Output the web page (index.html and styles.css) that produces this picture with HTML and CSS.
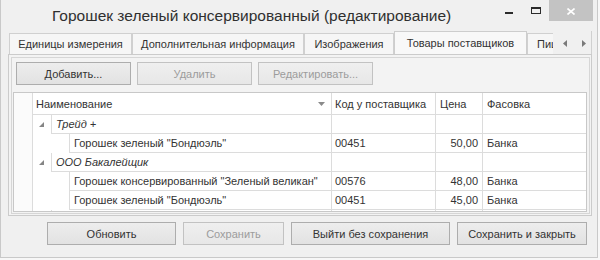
FILE: index.html
```html
<!DOCTYPE html>
<html lang="ru">
<head>
<meta charset="utf-8">
<title>Горошек зеленый консервированный (редактирование)</title>
<link rel="stylesheet" href="styles.css">
</head>
<body>
<div class="window">
  <div class="titlebar">
    <div class="title">Горошек зеленый консервированный (редактирование)</div>
    <div class="controls">
      <span class="ctl ctl-min"><svg width="8" height="2" viewBox="0 0 8 2"><rect width="8" height="2" fill="#2b2b2b"/></svg></span>
      <span class="ctl ctl-max"><svg width="10" height="7" viewBox="0 0 10 7"><rect x="0.5" y="1" width="9" height="5.5" fill="none" stroke="#2b2b2b" stroke-width="1"/><rect x="0" y="0" width="10" height="2" fill="#2b2b2b"/></svg></span>
      <span class="ctl ctl-close"><svg width="8" height="7" viewBox="0 0 8 7"><path d="M0.5 0.5 L7.5 6.5 M7.5 0.5 L0.5 6.5" stroke="#fff" stroke-width="1.6" fill="none"/></svg></span>
    </div>
  </div>

  <div class="tabs">
    <div class="tab tab-1">Единицы измерения</div>
    <div class="tab tab-2">Дополнительная информация</div>
    <div class="tab tab-3">Изображения</div>
    <div class="tab tab-4 active">Товары поставщиков</div>
    <div class="tab tab-5">Пищевая ценность</div>
    <div class="tab-arrows">
      <svg width="4" height="7" viewBox="0 0 4 7"><polygon points="4,0 4,7 0,3.5" fill="#7a7a7a"/></svg>
      <svg width="4" height="7" viewBox="0 0 4 7"><polygon points="0,0 0,7 4,3.5" fill="#7a7a7a"/></svg>
    </div>
  </div>

  <div class="page">
    <div class="page-inner">
      <div class="toolbar">
        <button class="btn btn-top">Добавить...</button>
        <button class="btn btn-top disabled">Удалить</button>
        <button class="btn btn-top disabled">Редактировать...</button>
      </div>
      <div class="grid">
        <div class="row head">
          <div class="cell ind"></div>
          <div class="cell name head-name"><span>Наименование</span><svg class="sort" width="7" height="4" viewBox="0 0 7 4"><polygon points="0,0 7,0 3.5,4" fill="#8a8a8a"/></svg></div>
          <div class="cell col">Код у поставщика</div>
          <div class="cell col pad4">Цена</div>
          <div class="cell col last pad4">Фасовка</div>
        </div>

        <div class="row">
          <div class="cell ind"></div>
          <div class="cell name"><span class="exp"><svg width="5" height="5" viewBox="0 0 5 5"><polygon points="5,0 5,5 0,5" fill="#858585"/></svg></span><span class="box group first">Трейд +</span></div>
          <div class="cell col"></div>
          <div class="cell col"></div>
          <div class="cell col last"></div>
        </div>
        <div class="row">
          <div class="cell ind"></div>
          <div class="cell name"><span class="indent"></span><span class="box">Горошек зеленый "Бондюэль"</span></div>
          <div class="cell col">00451</div>
          <div class="cell col num">50,00</div>
          <div class="cell col last pad4">Банка</div>
        </div>
        <div class="row">
          <div class="cell ind"></div>
          <div class="cell name"><span class="exp"><svg width="5" height="5" viewBox="0 0 5 5"><polygon points="5,0 5,5 0,5" fill="#858585"/></svg></span><span class="box group">ООО Бакалейщик</span></div>
          <div class="cell col"></div>
          <div class="cell col"></div>
          <div class="cell col last"></div>
        </div>
        <div class="row">
          <div class="cell ind"></div>
          <div class="cell name"><span class="indent"></span><span class="box">Горошек консервированный "Зеленый великан"</span></div>
          <div class="cell col">00576</div>
          <div class="cell col num">48,00</div>
          <div class="cell col last pad4">Банка</div>
        </div>
        <div class="row">
          <div class="cell ind"></div>
          <div class="cell name"><span class="indent"></span><span class="box">Горошек зеленый "Бондюэль"</span></div>
          <div class="cell col">00451</div>
          <div class="cell col num">45,00</div>
          <div class="cell col last pad4">Банка</div>
        </div>
        <div class="row">
          <div class="cell ind"></div>
          <div class="cell name"><span class="exp"></span><span class="box group"></span></div>
          <div class="cell col"></div>
          <div class="cell col"></div>
          <div class="cell col last"></div>
        </div>
      </div>
    </div>
  </div>

  <div class="footer">
    <button class="btn btn-refresh">Обновить</button>
    <button class="btn btn-save disabled">Сохранить</button>
    <button class="btn btn-exit">Выйти без сохранения</button>
    <button class="btn btn-close">Сохранить и закрыть</button>
  </div>
</div>
</body>
</html>
```
FILE: styles.css
```css
* { box-sizing: border-box; }
html, body { margin: 0; padding: 0; }
body {
  width: 600px;
  height: 260px;
  background: #f7f7f7;
  font-family: "Liberation Sans", Arial, sans-serif;
  font-size: 11px;
  color: #333;
  overflow: hidden;
}

.window {
  width: 598px;
  height: 258px;
  border: 1px solid #c9c9c9;
  border-top: none;
  background: #f0f0f0;
  display: flex;
  flex-direction: column;
}

/* title bar */
.titlebar {
  height: 31px;
  display: flex;
  flex: none;
}
.title {
  padding-left: 51px;
  font-size: 15.5px;
  line-height: 31px;
  color: #2f2f2f;
  white-space: nowrap;
}
.controls {
  margin-left: auto;
  margin-right: 4px;
  display: flex;
  height: 21px;
}
.ctl {
  display: flex;
  align-items: center;
  justify-content: center;
  height: 21px;
}
.ctl svg { display: block; }
.ctl-min { width: 28px; padding-top: 5px; }
.ctl-max { width: 26px; }
.ctl-close { width: 44px; background: #c3c3c3; padding-top: 1px; }

/* tabs */
.tabs {
  height: 23px;
  flex: none;
  display: flex;
  align-items: flex-end;
  padding-left: 8px;
}
.tab {
  height: 21px;
  border: 1px solid #d0d0d0;
  border-bottom: none;
  background: #f6f6f6;
  display: flex;
  align-items: center;
  justify-content: center;
  white-space: nowrap;
  color: #333;
  font-size: 11px;
}
.tab-1 { width: 123px; }
.tab-2 { width: 172px; }
.tab-3 { width: 90px; }
.tab-4 { width: 133px; }
.tab.active {
  height: 23px;
  background: #f8f8f8;
  border-color: #cdcdcd;
}
.tab-5 {
  width: 26px;
  border-right: none;
  justify-content: flex-start;
  padding-left: 9px;
  overflow: hidden;
}
.tab-arrows {
  width: 39px;
  height: 23px;
  border-right: 1px solid #d0d0d0;
  display: flex;
  align-items: center;
  padding-left: 10px;
  gap: 15px;
  padding-top: 1px;
}
.tab-arrows svg { display: block; }

/* page */
.page {
  flex: none;
  margin: 0 5px 0 7px;
  height: 162px;
  border: 1px solid #cbcbcb;
  padding: 2px 1px 1px 2px;
  background: #f3f3f3;
}
.page-inner {
  height: 157px;
  border: 1px solid #d6d6d6;
  padding: 4px 2px 1px 1px;
  display: flex;
  flex-direction: column;
  gap: 7px;
}
.toolbar {
  display: flex;
  gap: 6px;
  margin-left: 3px;
  height: 23px;
  flex: none;
}

/* buttons */
.btn {
  height: 23px;
  margin: 0;
  padding: 0;
  border: 1px solid #adadad;
  background: linear-gradient(#ededed, #e2e2e2);
  font-family: "Liberation Sans", Arial, sans-serif;
  font-size: 11px;
  color: #333;
  text-align: center;
  white-space: nowrap;
}
.btn.disabled {
  color: #9c9c9c;
  border-color: #c2c2c2;
  background: linear-gradient(#efefef, #e7e7e7);
}
.btn-top { width: 115px; }

/* grid */
.grid {
  width: 574px;
  height: 120px;
  flex: none;
  border: 1px solid #c8c8c8;
  background: #fff;
  overflow: hidden;
}
.row {
  display: grid;
  grid-template-columns: 19px 299px 104px 47px 103px;
  height: 19px;
}
.row.head { height: 22px; }
.cell {
  height: 100%;
  border-right: 1px solid #dcdcdc;
  white-space: nowrap;
  overflow: hidden;
  display: flex;
  align-items: center;
}
.cell.last { border-right: none; }
.cell.ind { background: #fbfbfb; }
.col {
  border-bottom: 1px solid #dcdcdc;
  padding-left: 3px;
}
.col.pad4 { padding-left: 4px; }
.col.num { justify-content: flex-end; padding-right: 4px; }
.head .name {
  border-bottom: 1px solid #dcdcdc;
  padding-left: 3px;
  padding-right: 6px;
  justify-content: space-between;
}
.head .col { padding-top: 1px; }
.head-name span { padding-top: 1px; }
.sort { display: block; margin-top: 1px; }

.exp {
  width: 18px;
  height: 100%;
  flex: none;
  display: flex;
  align-items: flex-start;
  padding-top: 7px;
  padding-left: 6px;
}
.exp svg { display: block; }
.indent { width: 36px; height: 100%; flex: none; }
.box {
  flex: 1;
  height: 100%;
  border-left: 1px solid #dcdcdc;
  border-bottom: 1px solid #dcdcdc;
  padding-left: 4px;
  display: flex;
  align-items: center;
}
.box.group {
  font-style: italic;
  box-shadow: 0 -1px 0 #dcdcdc;
}

/* footer */
.footer {
  flex: 1;
  display: flex;
  justify-content: flex-end;
  align-items: flex-start;
  gap: 7px;
  padding-top: 6px;
  padding-right: 10px;
}
.btn-refresh { width: 129px; }
.btn-save { width: 101px; }
.btn-exit { width: 159px; }
.btn-close { width: 130px; }
```
